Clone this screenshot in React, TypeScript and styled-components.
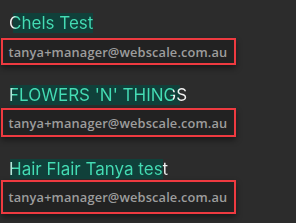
import styled, { createGlobalStyle } from "styled-components";

const GlobalStyle = createGlobalStyle`
  html, body {
    margin: 0;
    padding: 0;
    background: #2c2c2c;
  }
  body {
    font-family: "Open Sans", Lato, sans-serif;
  }
`;

interface Account {
  name: string;
  email: string;
  markFrom: number; // highlight start, px from text start
  markTo: number; // highlight end
  tealTo: number; // where the teal text colour stops
  gapTop: number;
  gapMid: number;
  boxHeight: number;
}

const accounts: Account[] = [
  { name: "Chels Test", email: "tanya+manager@webscale.com.au", markFrom: 4, markTo: 84, tealTo: 86, gapTop: 13, gapMid: 5, boxHeight: 27 },
  { name: "FLOWERS 'N' THINGS", email: "tanya+manager@webscale.com.au", markFrom: 1, markTo: 171, tealTo: 164, gapTop: 20, gapMid: 3, boxHeight: 29 },
  { name: "Hair Flair Tanya test", email: "tanya+manager@webscale.com.au", markFrom: 1, markTo: 154, tealTo: 154, gapTop: 22, gapMid: 1, boxHeight: 34 },
];

const Page = styled.div`
  width: 296px;
  height: 223px;
  overflow: hidden;
  display: flex;
  flex-direction: column;
`;

const Row = styled.div<{ $top: number; $gap: number }>`
  display: flex;
  flex-direction: column;
  align-items: flex-start;
  margin-top: ${(p) => p.$top}px;
  gap: ${(p) => p.$gap}px;
`;

const Title = styled.div<{ $from: number; $to: number }>`
  position: relative;
  z-index: 0;
  margin-left: 9px;
  height: 20px;
  line-height: 20px;
  font-family: Inter, "Open Sans", sans-serif;
  font-size: 17px;
  font-weight: 400;
  white-space: nowrap;

  &::before {
    content: "";
    position: absolute;
    z-index: -1;
    top: 0;
    bottom: 0;
    left: ${(p) => p.$from}px;
    width: ${(p) => p.$to - p.$from}px;
    background: #10403a;
  }
`;

const TitleText = styled.span<{ $from: number; $to: number }>`
  color: transparent;
  background-image: linear-gradient(
    90deg,
    #f2f2f2 ${(p) => p.$from}px,
    #44dcb4 ${(p) => p.$from + 4}px,
    #44dcb4 ${(p) => p.$to}px,
    #f2f2f2 ${(p) => p.$to}px
  );
  -webkit-background-clip: text;
  background-clip: text;
`;

const EmailBox = styled.div<{ $h: number }>`
  box-sizing: border-box;
  margin-left: 1px;
  width: 235px;
  height: ${(p) => p.$h}px;
  border: 2.5px solid #ee3a40;
  background: #222222;
  box-shadow: 0 3px 6px rgba(0, 0, 0, 0.45);
  display: flex;
  align-items: center;
  padding-left: 5.5px;
`;

const Email = styled.span`
  font-size: 12.8px;
  font-weight: 600;
  letter-spacing: 0.15px;
  color: #9d9d9d;
  white-space: nowrap;
`;

export default function App() {
  return (
    <>
      <GlobalStyle />
      <Page>
        {accounts.map((a) => (
          <Row key={a.name} $top={a.gapTop} $gap={a.gapMid}>
            <Title $from={a.markFrom} $to={a.markTo}>
              <TitleText $from={a.markFrom} $to={a.tealTo}>
                {a.name}
              </TitleText>
            </Title>
            <EmailBox $h={a.boxHeight}>
              <Email>{a.email}</Email>
            </EmailBox>
          </Row>
        ))}
      </Page>
    </>
  );
}
